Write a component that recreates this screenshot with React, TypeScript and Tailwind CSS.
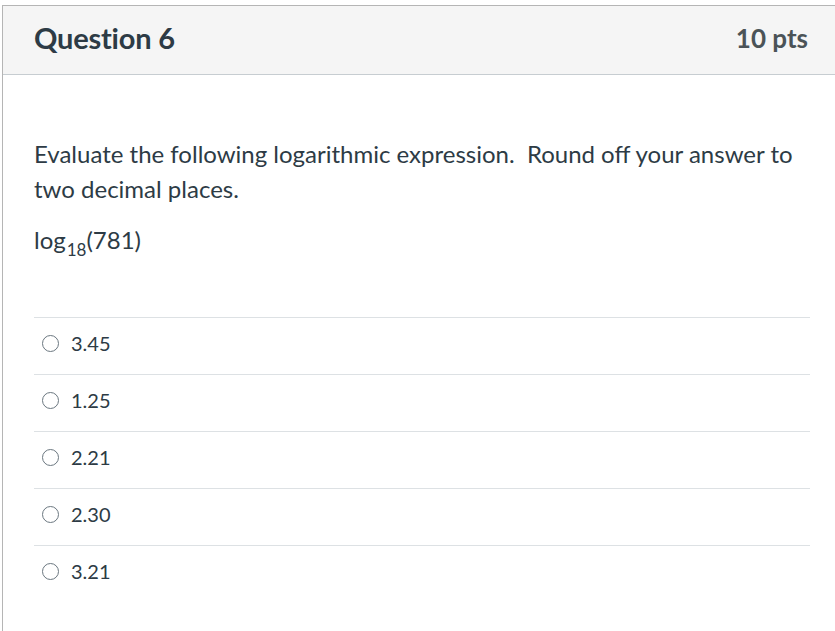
import React from "react";

const answers = ["3.45", "1.25", "2.21", "2.30", "3.21"];

export default function App() {
  return (
    <div className="w-[835px] h-[631px] overflow-hidden bg-white" style={{ fontFamily: "Lato, 'Noto Sans', sans-serif" }}>
      <div className="ml-[2px] mt-[5px] w-[840px] h-[640px] border border-[#b5b5b5] bg-white">
        <div className="h-[69px] bg-[#f5f5f5] border-b border-[#c7cdd1] flex items-center justify-between pl-[31px] pr-[33px] pb-[4px]">
          <div className="text-[29px] font-bold text-[#2d3b45] tracking-[-0.2px]">Question 6</div>
          <div className="text-[26px] font-bold text-[#4b5357]">10 pts</div>
        </div>
        <div className="pl-[31px] w-[807px]">
          <div className="pt-[61px] text-[24px] leading-[35px] text-[#2d3b45]">
            Evaluate the following logarithmic expression.&nbsp; Round off your answer to two decimal places.
          </div>
          <div className="mt-[16px] text-[24px] leading-[35px] text-[#2d3b45]">
            log<sub className="text-[17px] align-[-3px] ml-[1px]">18</sub>(781)
          </div>
          <div className="mt-[60px]">
            {answers.map((a) => (
              <div key={a} className="h-[57px] border-t border-[#dde1e4] flex items-center pl-[8px] pb-[6px]">
                <span className="w-[17px] h-[17px] rounded-full border-[1.5px] border-[#6b7780] bg-white" />
                <span className="ml-[12px] text-[20px] text-[#2d3b45]">{a}</span>
              </div>
            ))}
          </div>
        </div>
      </div>
    </div>
  );
}
